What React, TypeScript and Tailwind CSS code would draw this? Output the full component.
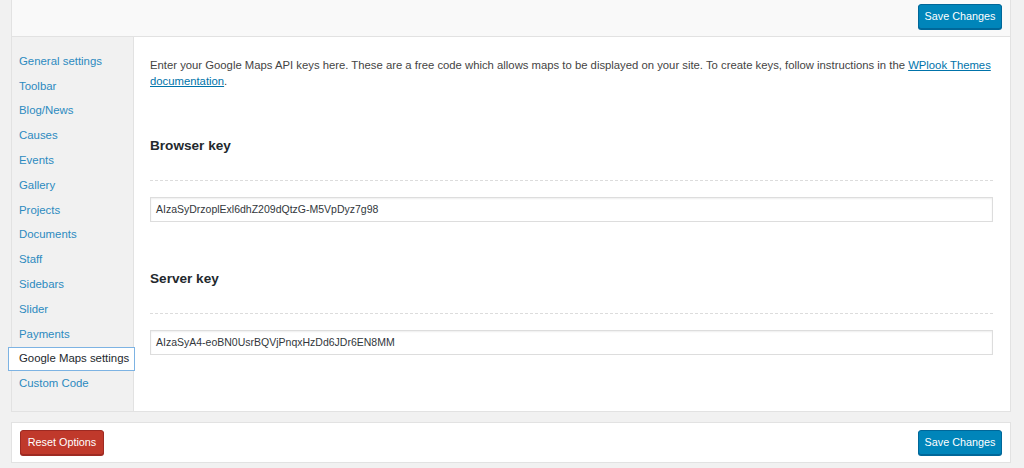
import React from "react";

const items = [
  "General settings",
  "Toolbar",
  "Blog/News",
  "Causes",
  "Events",
  "Gallery",
  "Projects",
  "Documents",
  "Staff",
  "Sidebars",
  "Slider",
  "Payments",
  "Google Maps settings",
  "Custom Code",
];

function BlueButton() {
  return (
    <button className="h-[25px] w-[84px] rounded-[3px] border border-[#006799] bg-[#0085ba] text-[10.8px] text-white shadow-[0_1px_0_#006799]">
      Save Changes
    </button>
  );
}

export default function App() {
  return (
    <div
      className="h-[468px] w-[1024px] overflow-hidden bg-[#f1f1f1] pl-[11px] pr-[13px] text-[#444]"
      style={{ fontFamily: '"Liberation Sans", Arial, sans-serif' }}
    >
      <div className="flex h-[37px] items-start justify-end border-x border-b border-[#e2e2e2] bg-[#f9f9f9] pr-[8px] pt-[4px]">
        <BlueButton />
      </div>
      <div className="flex h-[375px] border-x border-b border-[#e2e2e2] bg-white">
        <div className="w-[122px] shrink-0 border-r border-[#e2e2e2] bg-[#f1f1f1] pt-[12px]">
          {items.map((it) => {
            const active = it === "Google Maps settings";
            return (
              <div
                key={it}
                className={
                  active
                    ? "relative z-10 -ml-[4px] flex h-[24.8px] w-[127px] items-center whitespace-nowrap border border-[#7db3e3] bg-white pl-[10px] text-[11.4px] text-[#23282d]"
                    : "flex h-[24.8px] items-center whitespace-nowrap pl-[7px] text-[11.4px] text-[#2c8ac0]"
                }
              >
                {it}
              </div>
            );
          })}
        </div>
        <div className="flex-1 pl-[16px] pr-[17px] pt-[20px]">
          <p className="text-[11.3px] leading-[16px] text-[#444]">
            Enter your Google Maps API keys here. These are a free code which allows maps to be displayed on your site. To create keys, follow instructions in the{" "}
            <a className="text-[#0073aa] underline">WPlook Themes documentation</a>.
          </p>
          <h3 className="mt-[47px] text-[13.6px] font-semibold leading-[20px] text-[#23282d]">Browser key</h3>
          <div className="mt-[24px] border-t border-dashed border-[#dcdcdc]" />
          <div className="mt-[16px] flex h-[25px] items-center border border-[#dddddd] pl-[5px] text-[10.5px] text-[#32373c] shadow-[inset_0_1px_2px_rgba(0,0,0,0.07)]">
            AIzaSyDrzoplExl6dhZ209dQtzG-M5VpDyz7g98
          </div>
          <h3 className="mt-[47px] text-[13.6px] font-semibold leading-[20px] text-[#23282d]">Server key</h3>
          <div className="mt-[24px] border-t border-dashed border-[#dcdcdc]" />
          <div className="mt-[16px] flex h-[25px] items-center border border-[#dddddd] pl-[5px] text-[10.5px] text-[#32373c] shadow-[inset_0_1px_2px_rgba(0,0,0,0.07)]">
            AIzaSyA4-eoBN0UsrBQVjPnqxHzDd6JDr6EN8MM
          </div>
        </div>
      </div>
      <div className="mt-[10px] flex h-[41px] items-center justify-between border border-[#e2e2e2] bg-white px-[8px]">
        <button className="h-[25px] w-[84px] rounded-[3px] border border-[#9e2a22] bg-[#c0392b] text-[10.8px] text-white shadow-[0_1px_0_#9e2a22]">
          Reset Options
        </button>
        <BlueButton />
      </div>
    </div>
  );
}
